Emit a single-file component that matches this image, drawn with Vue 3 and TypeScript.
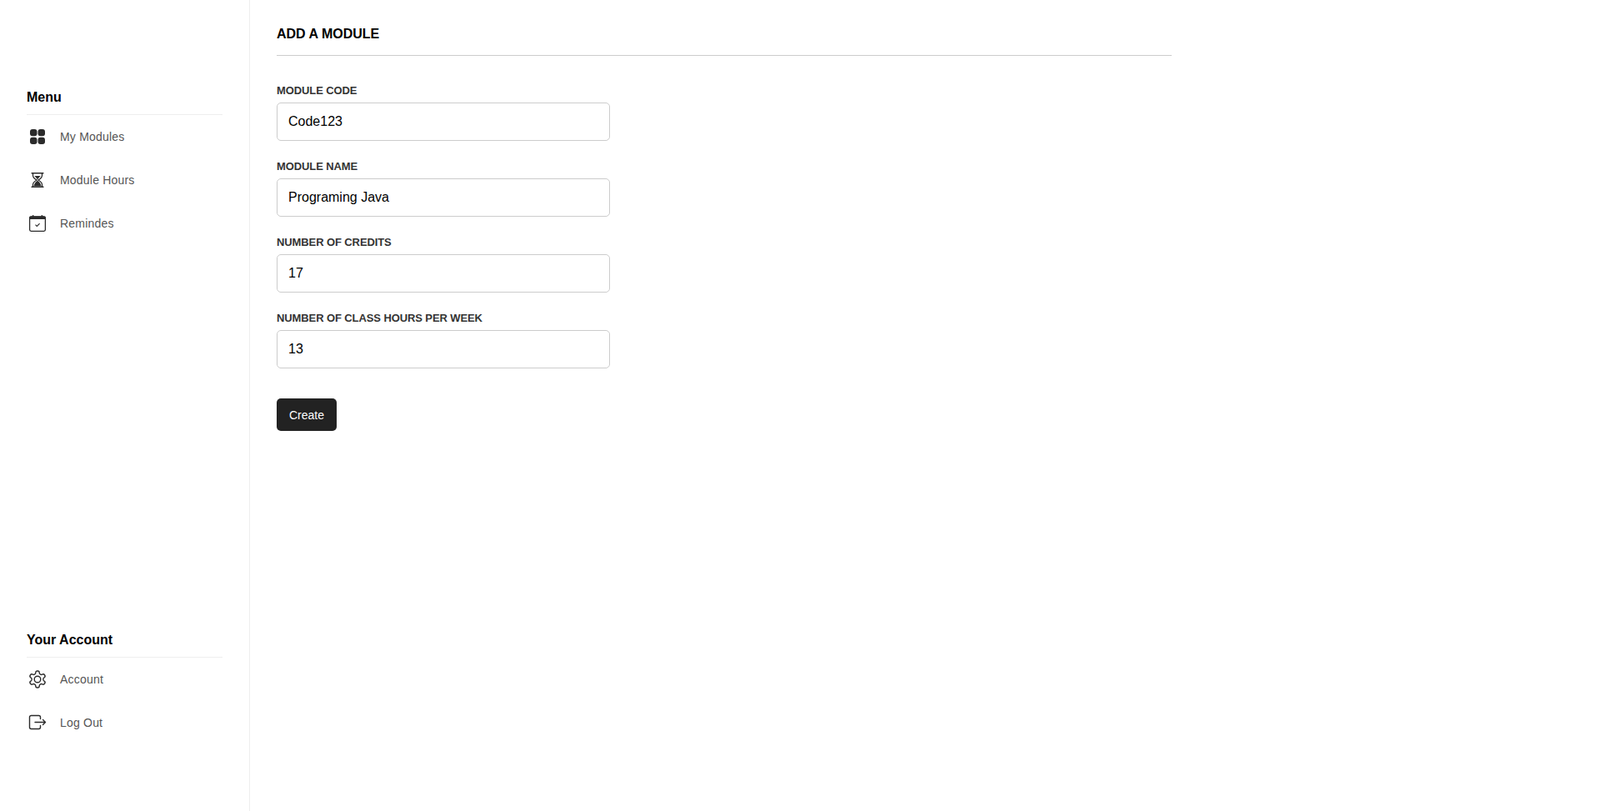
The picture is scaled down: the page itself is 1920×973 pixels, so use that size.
<template>
  <div class="page">
    <aside class="sidebar">
      <nav class="side-section">
        <h3 class="side-title">Menu</h3>
        <a v-for="item in menuItems" :key="item.label" class="side-link" href="#">
          <svg class="side-icon" viewBox="0 0 24 24" v-html="item.icon"></svg>
          <span>{{ item.label }}</span>
        </a>
      </nav>
      <nav class="side-section">
        <h3 class="side-title">Your Account</h3>
        <a v-for="item in accountItems" :key="item.label" class="side-link" href="#">
          <svg class="side-icon" viewBox="0 0 24 24" v-html="item.icon"></svg>
          <span>{{ item.label }}</span>
        </a>
      </nav>
    </aside>

    <main class="content">
      <h2 class="content-title">ADD A MODULE</h2>
      <form class="module-form" @submit.prevent>
        <div v-for="field in fields" :key="field.label" class="field">
          <label class="field-label">{{ field.label }}</label>
          <input class="field-input" type="text" :value="field.value" />
        </div>
        <button class="create-btn" type="submit">Create</button>
      </form>
    </main>
  </div>
</template>

<script setup lang="ts">
interface SideItem {
  label: string
  icon: string
}

const gridIcon = `<g fill="#2b2b2b"><rect x="3" y="3" width="8.500" height="8.300" rx="3"/><rect x="12.500" y="3" width="8.500" height="8.300" rx="3"/><rect x="3" y="12.700" width="8.500" height="8.300" rx="3"/><rect x="12.500" y="12.700" width="8.500" height="8.300" rx="3"/></g>`

const hourglassIcon = `<g fill="#2b2b2b"><rect x="4.500" y="3" width="15" height="1.600" rx=".5"/><rect x="4.500" y="19.400" width="15" height="1.600" rx=".5"/><path d="M12 12.800c-1.700.9-3.700 3-4.600 6.700h9.200c-.9-3.700-2.900-5.800-4.600-6.700z"/><path d="M8.300 7h7.400L12 11.300z"/></g><path fill="none" stroke="#2b2b2b" stroke-width="1.300" d="M6.500 4v2.500c0 2.200 2.300 4.200 4.600 5.500-2.300 1.300-4.600 3.300-4.600 5.500V20M17.500 4v2.500c0 2.200-2.300 4.200-4.600 5.500 2.300 1.300 4.600 3.300 4.600 5.500V20"/>`

const calendarIcon = `<rect x="2.600" y="4" width="18.800" height="17.400" rx="1.800" fill="none" stroke="#2b2b2b" stroke-width="1.300"/><path fill="#2b2b2b" d="M2 5.500a2 2 0 0 1 2-2h2V2h1.300v1.500h9.400V2H18v1.500h2a2 2 0 0 1 2 2v1.500H2V5.500z"/><path fill="none" stroke="#2b2b2b" stroke-width="1.100" d="M9.500 13.600l1.800 1.800 3.300-3.300"/>`

const gearIcon = `<path fill="none" stroke="#2b2b2b" stroke-width="1.400" stroke-linejoin="round" d="M12.220 2h-.44a2 2 0 0 0-2 2v.18a2 2 0 0 1-1 1.730l-.43.25a2 2 0 0 1-2 0l-.15-.08a2 2 0 0 0-2.730.73l-.22.38a2 2 0 0 0 .73 2.730l.15.1a2 2 0 0 1 1 1.720v.51a2 2 0 0 1-1 1.740l-.15.09a2 2 0 0 0-.73 2.730l.22.38a2 2 0 0 0 2.730.73l.15-.08a2 2 0 0 1 2 0l.43.25a2 2 0 0 1 1 1.730V20a2 2 0 0 0 2 2h.44a2 2 0 0 0 2-2v-.18a2 2 0 0 1 1-1.730l.43-.25a2 2 0 0 1 2 0l.15.08a2 2 0 0 0 2.730-.73l.22-.39a2 2 0 0 0-.73-2.730l-.15-.08a2 2 0 0 1-1-1.740v-.5a2 2 0 0 1 1-1.740l.15-.09a2 2 0 0 0 .73-2.730l-.22-.38a2 2 0 0 0-2.730-.73l-.15.08a2 2 0 0 1-2 0l-.43-.25a2 2 0 0 1-1-1.730V4a2 2 0 0 0-2-2z"/><circle cx="12" cy="12" r="3.800" fill="none" stroke="#2b2b2b" stroke-width="1.400"/>`

const logoutIcon = `<path fill="none" stroke="#2b2b2b" stroke-width="1.400" stroke-linecap="round" stroke-linejoin="round" d="M15.500 7.500V5.500a2 2 0 0 0-2-2h-9a2 2 0 0 0-2 2v12a2 2 0 0 0 2 2h9a2 2 0 0 0 2-2v-2M9 11.500h12.500M18.500 8.500l3 3-3 3"/>`

const menuItems: SideItem[] = [
  { label: 'My Modules', icon: gridIcon },
  { label: 'Module Hours', icon: hourglassIcon },
  { label: 'Remindes', icon: calendarIcon },
]

const accountItems: SideItem[] = [
  { label: 'Account', icon: gearIcon },
  { label: 'Log Out', icon: logoutIcon },
]

const fields = [
  { label: 'MODULE CODE', value: 'Code123' },
  { label: 'MODULE NAME', value: 'Programing Java' },
  { label: 'NUMBER OF CREDITS', value: '17' },
  { label: 'NUMBER OF CLASS HOURS PER WEEK', value: '13' },
]
</script>

<style>
html,
body {
  margin: 0;
  background: #fff;
}
</style>

<style scoped>
.page {
  display: flex;
  min-height: 973px;
  font-family: "Liberation Sans", Arial, sans-serif;
  color: #000;
}

.sidebar {
  box-sizing: border-box;
  width: 300px;
  height: 973px;
  flex-shrink: 0;
  padding: 107px 32px 80px;
  border-right: 1px solid #eee;
  display: flex;
  flex-direction: column;
  justify-content: space-between;
}

.side-title {
  margin: 0;
  padding-bottom: 11px;
  width: 235px;
  font-size: 16px;
  line-height: 19px;
  font-weight: 700;
  border-bottom: 1px solid #eee;
}

.side-link {
  box-sizing: border-box;
  display: flex;
  align-items: center;
  gap: 15px;
  height: 52px;
  width: 235px;
  padding-left: 1px;
  font-size: 14px;
  letter-spacing: 0.2px;
  color: #555;
  text-decoration: none;
}

.side-icon {
  width: 24px;
  height: 24px;
  flex-shrink: 0;
}

.content {
  box-sizing: border-box;
  width: 1106px;
  padding: 31px 0 0 32px;
}

.content-title {
  margin: 0;
  padding-bottom: 15px;
  font-size: 16px;
  line-height: 20px;
  font-weight: 700;
  border-bottom: 1px solid #ccc;
}

.module-form {
  padding-top: 34px;
}

.field {
  margin-bottom: 23px;
}

.field-label {
  display: block;
  margin-bottom: 7px;
  font-size: 13px;
  line-height: 15px;
  font-weight: 700;
  letter-spacing: -0.1px;
  color: #333;
}

.field-input {
  display: block;
  box-sizing: border-box;
  width: 400px;
  height: 46px;
  padding: 0 13px;
  border: 1px solid #ccc;
  border-radius: 5px;
  outline: none;
  font-family: inherit;
  font-size: 16px;
  color: #000;
  background: #fff;
}

.create-btn {
  display: block;
  width: 72px;
  height: 39px;
  margin-top: 36px;
  padding: 0;
  border: none;
  border-radius: 5px;
  background: #222;
  color: #fff;
  font-family: inherit;
  font-size: 14px;
}
</style>
